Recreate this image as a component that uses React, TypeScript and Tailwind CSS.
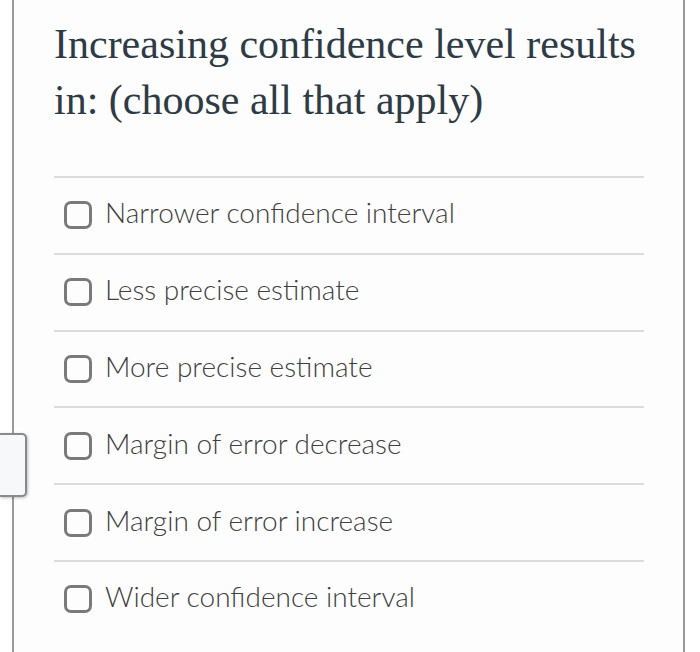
import React from "react";

const options = [
  "Narrower confidence interval",
  "Less precise estimate",
  "More precise estimate",
  "Margin of error decrease",
  "Margin of error increase",
  "Wider confidence interval",
];

export default function App() {
  return (
    <div className="relative w-[700px] h-[652px] bg-white overflow-hidden">
      <div className="ml-[12px] w-[673px] h-[652px] border-l-2 border-r-2 border-[#9a9a9a] bg-[#fdfdfd]">
        <div className="pl-[40px] pr-[39px] pt-[16px]">
          <h1
            className="text-[#2d3b45] text-[42px] leading-[56px] font-normal"
            style={{ fontFamily: '"Liberation Serif", serif' }}
          >
            Increasing confidence level results in: (choose all that apply)
          </h1>
          <div className="mt-[48px]" style={{ fontFamily: "Lato, sans-serif" }}>
            {options.map((o) => (
              <div
                key={o}
                className="flex items-center h-[76.8px] border-t-2 border-[#dcdcdc] pl-[10px] pb-[6px]"
              >
                <div className="mt-[6px] w-[28px] h-[28px] rounded-[7px] border-[3px] border-[#7a7a7a] shrink-0" />
                <span className="ml-[13px] text-[28px] font-light text-[#3f3f3f]">{o}</span>
              </div>
            ))}
          </div>
        </div>
      </div>
      <div className="absolute left-0 top-[433px] w-[27px] h-[64px] rounded-r-[5px] border-2 border-l-0 border-[#8a8a8a] bg-[#f6f8fa] shadow-[1px_1px_3px_rgba(0,0,0,0.25)]" />
    </div>
  );
}
